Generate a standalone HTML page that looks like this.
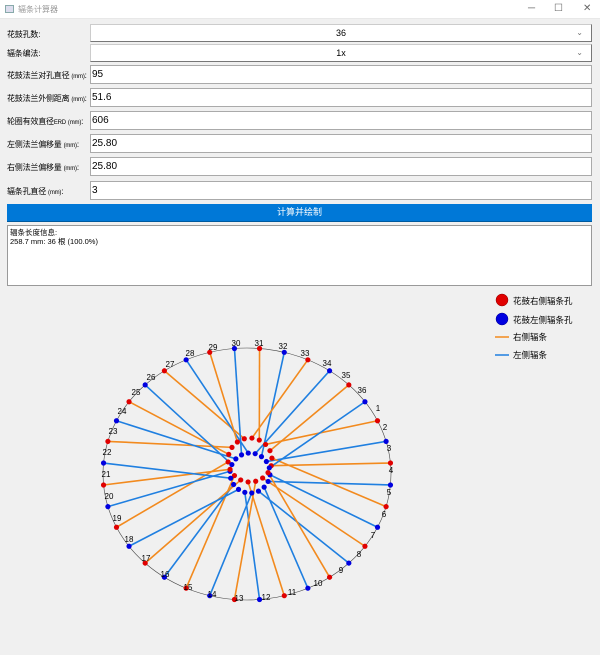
<!DOCTYPE html>
<html><head><meta charset="utf-8"><style>
*{box-sizing:border-box;margin:0;padding:0}
body{width:600px;height:655px;background:#f0f0f0;font-family:"Liberation Sans","Noto Sans CJK SC",sans-serif;font-size:9px;color:#000;position:relative;overflow:hidden}
.title{position:absolute;left:0;top:0;width:600px;height:19px;background:#fff;border-bottom:1px solid #e8e8e8}
.title .t{position:absolute;left:18px;top:4px;color:#999;font-size:8px}
.title .ic{position:absolute;left:5px;top:5px;width:9px;height:8px;border:1px solid #8aa;background:#dde}
.wc{position:absolute;top:3px;color:#666;font-size:10px}
.lbl{position:absolute;left:7px;font-size:8px;white-space:nowrap;letter-spacing:-0.2px}
.lbl small{font-size:6px}
.inp{position:absolute;left:90px;width:502px;height:19px;background:#fff;border:1px solid #aaa;padding-left:1px;font-size:10px;line-height:17px}
.cmb{position:absolute;left:90px;width:502px;height:18px;background:#fff;border:1px solid #ccc;border-bottom:1px solid #777;border-right:1px solid #777;text-align:center;font-size:9px;line-height:16px}
.cmb span{position:absolute;right:8px;top:0;color:#777;font-size:8px}
.btn{position:absolute;left:7px;top:204px;width:585px;height:18px;background:#0078d7;color:#fff;text-align:center;line-height:17px;font-size:9px;border-bottom:1px solid #005a9e}
.ta{position:absolute;left:7px;top:225px;width:585px;height:61px;background:#fff;border:1px solid #999;padding:2px 2px;font-size:7.5px;line-height:9px}
</style></head><body>
<div class="title"><div class="ic"></div><div class="t">辐条计算器</div>
<div class="wc" style="left:528px">─</div><div class="wc" style="left:554px">☐</div><div class="wc" style="left:583px">✕</div></div>
<div class="lbl" style="top:29px">花鼓孔数:</div><div class="cmb" style="top:24px">36<span>⌄</span></div>
<div class="lbl" style="top:48px">辐条编法:</div><div class="cmb" style="top:44px">1x<span>⌄</span></div>
<div class="lbl" style="top:70px">花鼓法兰对孔直径 <small>(mm)</small>:</div><div class="inp" style="top:65px">95</div>
<div class="lbl" style="top:93px">花鼓法兰外侧距离 <small>(mm)</small>:</div><div class="inp" style="top:88px">51.6</div>
<div class="lbl" style="top:116px">轮圈有效直径<small>ERD</small> <small>(mm)</small>:</div><div class="inp" style="top:111px">606</div>
<div class="lbl" style="top:139px">左侧法兰偏移量 <small>(mm)</small>:</div><div class="inp" style="top:134px">25.80</div>
<div class="lbl" style="top:162px">右侧法兰偏移量 <small>(mm)</small>:</div><div class="inp" style="top:157px">25.80</div>
<div class="lbl" style="top:186px">辐条孔直径 <small>(mm)</small>:</div><div class="inp" style="top:181px">3</div>
<div class="btn">计算并绘制</div>
<div class="ta">辐条长度信息:<br>258.7 mm: 36 根 (100.0%)</div>
<svg width="600" height="367" style="position:absolute;left:0;top:288px" viewBox="0 288 600 367">
<circle cx="502" cy="300" r="6" fill="#e00000" stroke="#800" stroke-width="0.5"/>
<text x="513" y="304" font-size="8.5" font-family="Liberation Sans,Noto Sans CJK SC,sans-serif">花鼓右侧辐条孔</text>
<circle cx="502" cy="319" r="6" fill="#0000e0" stroke="#008" stroke-width="0.5"/>
<text x="513" y="323" font-size="8.5" font-family="Liberation Sans,Noto Sans CJK SC,sans-serif">花鼓左侧辐条孔</text>
<line x1="495" y1="337" x2="509" y2="337" stroke="#f28a1e" stroke-width="1.5"/>
<text x="513" y="340" font-size="8.5" font-family="Liberation Sans,Noto Sans CJK SC,sans-serif">右侧辐条</text>
<line x1="495" y1="355" x2="509" y2="355" stroke="#1f7fe0" stroke-width="1.5"/>
<text x="513" y="358" font-size="8.5" font-family="Liberation Sans,Noto Sans CJK SC,sans-serif">左侧辐条</text>
<ellipse cx="247" cy="474" rx="144" ry="126" fill="none" stroke="#444" stroke-width="0.6"/>
<g id="sp"></g>
<g font-size="8" font-family="Liberation Sans,sans-serif" text-anchor="middle">
<text x="378" y="411">1</text><text x="385" y="430">2</text><text x="389" y="451">3</text><text x="391" y="473">4</text><text x="389" y="495">5</text><text x="384" y="517">6</text><text x="373" y="538">7</text><text x="359" y="557">8</text><text x="341" y="573">9</text><text x="318" y="586">10</text><text x="292" y="595">11</text><text x="266" y="600">12</text><text x="239" y="601">13</text><text x="212" y="597">14</text><text x="188" y="590">15</text><text x="165" y="577">16</text><text x="146" y="561">17</text><text x="129" y="542">18</text><text x="117" y="521">19</text><text x="109" y="499">20</text><text x="106" y="477">21</text><text x="107" y="455">22</text><text x="113" y="434">23</text><text x="122" y="414">24</text><text x="136" y="395">25</text><text x="151" y="380">26</text><text x="170" y="367">27</text><text x="190" y="356">28</text><text x="213" y="350">29</text><text x="236" y="346">30</text><text x="259" y="346">31</text><text x="283" y="349">32</text><text x="305" y="356">33</text><text x="327" y="366">34</text><text x="346" y="378">35</text><text x="362" y="393">36</text>
</g>
</svg>
<script>
var g=document.getElementById('sp'),s='',d='';
var cx=247,cy=474,rx=144,ry=126;
for(var k=1;k<=36;k++){var th=((k-4)*10+5)*Math.PI/180;var x=cx+rx*Math.cos(th),y=cy+ry*Math.sin(th);
var red=k%2==1;var j=red?(k-1)/2:k/2;var hc=red?460:473;var hr=red?22:20;
var sg=red?(j%2?1:-1):(j%2?-1:1);var ha=th+sg*20*Math.PI/180;
var hx=250+hr*Math.cos(ha),hy=hc+hr*Math.sin(ha);
s+='<line x1="'+x+'" y1="'+y+'" x2="'+hx+'" y2="'+hy+'" stroke="'+(red?'#f28a1e':'#1f7fe0')+'" stroke-width="1.6"/>';
d+='<circle cx="'+x+'" cy="'+y+'" r="2.6" fill="'+(red?'#e00000':'#0000e0')+'"/><circle cx="'+hx+'" cy="'+hy+'" r="2.6" fill="'+(red?'#e00000':'#0000e0')+'"/>';}
g.innerHTML=s+d;
</script>
</body></html>
